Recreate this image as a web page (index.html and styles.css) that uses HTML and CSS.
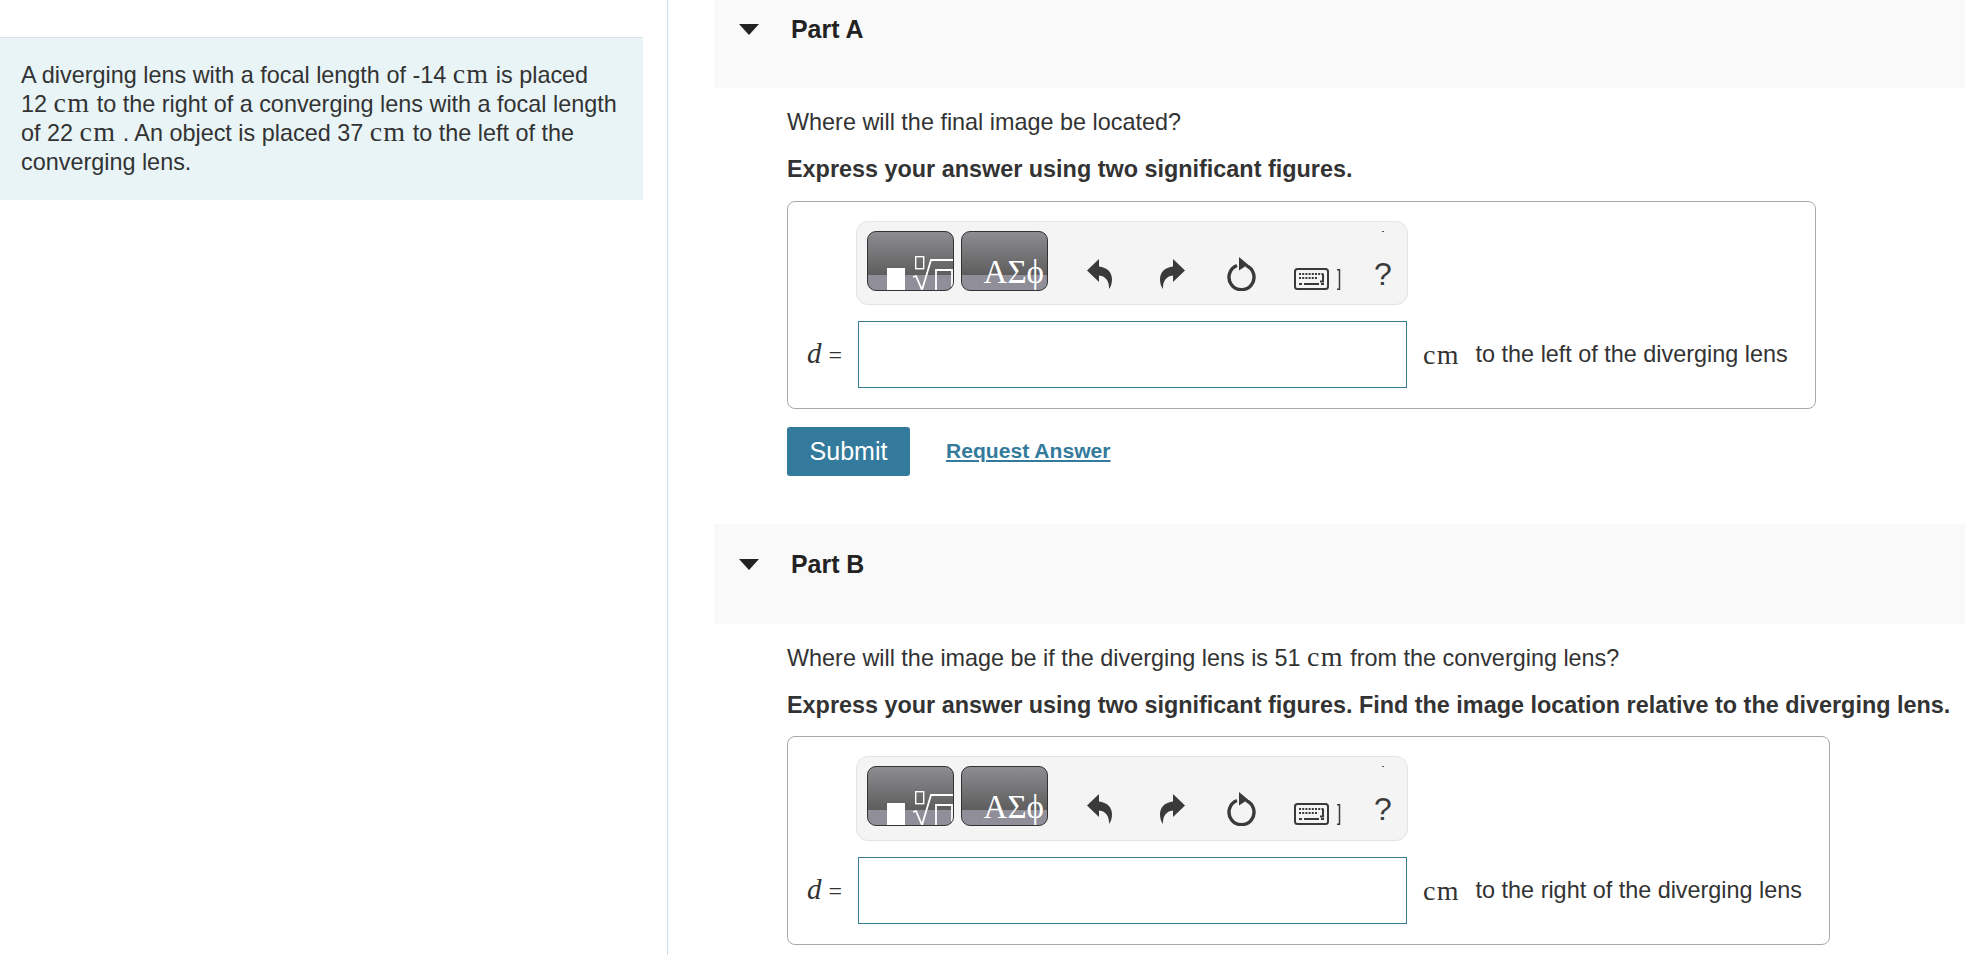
FILE: index.html
```html
<!DOCTYPE html>
<html lang="en">
<head>
<meta charset="utf-8">
<title>Lenses</title>
<link rel="stylesheet" href="styles.css">
</head>
<body>
<div class="page">
  <aside class="left">
    <div class="intro">A diverging lens with a focal length of -14 <span class="m">cm</span> is placed 12 <span class="m">cm</span> to the right of a converging lens with a focal length of 22 <span class="m">cm</span> . An object is placed 37 <span class="m">cm</span> to the left of the converging lens.</div>
  </aside>
  <main class="right">
    <section class="part">
      <header class="part-head part-head-first"><span class="tri"></span><h2>Part A</h2></header>
      <div class="part-body">
        <p class="q">Where will the final image be located?</p>
        <p class="hint">Express your answer using two significant figures.</p>
        <div class="box">
          <div class="toolbar">
            <div class="tpl"><svg width="87" height="60" viewBox="0 0 87 60"><rect x="20" y="37" width="18" height="24" fill="#fff"/><rect x="48.700" y="25.700" width="8" height="12" fill="none" stroke="#fff" stroke-width="1.400"/><path d="M46 46l3-1 6 14 9-30h23M69 61V39h16v22" fill="none" stroke="#fff" stroke-width="1.800"/></svg></div>
            <div class="tpl sym">ΑΣϕ</div>
            <svg class="ic undo" width="25" height="30" viewBox="0 0 25 30"><path d="M0 11.500L12 0v7.500C20 8.500 25 13 25 20.500c0 3.500-1 7-3 9.500 .5-7-3-13-10-13.500v6.500z" fill="#3a3a3a"/></svg>
            <svg class="ic redo" width="25" height="30" viewBox="0 0 25 30"><path d="M25 11.500L13 0v7.500C5 8.500 0 13 0 20.500c0 3.500 1 7 3 9.500-.5-7 3-13 10-13.500v6.500z" fill="#3a3a3a"/></svg>
            <svg class="ic reload" width="30" height="34" viewBox="0 0 30 34"><path d="M10 8.500a12.500 12.500 0 1 0 9 0" fill="none" stroke="#3a3a3a" stroke-width="3.400"/><path d="M12 0l9 7.500-9 6z" fill="#3a3a3a"/></svg>
            <svg class="ic kbd" width="35" height="22" viewBox="0 0 35 22"><rect x="1" y="1" width="33" height="20" rx="2.500" fill="none" stroke="#3a3a3a" stroke-width="2"/><path d="M5 6h25M5 10h19" stroke="#3a3a3a" stroke-width="2" stroke-dasharray="2 1.200" fill="none"/><path d="M29 6v7.500h-3M5 16h3M10 16h15M27 16h3" stroke="#3a3a3a" stroke-width="2" fill="none"/></svg>
            <svg class="ic brk" width="5" height="21" viewBox="0 0 5 21"><path d="M1 .7h2.500v19.600H1" fill="none" stroke="#3a3a3a" stroke-width="1.500"/></svg>
            <div class="help"><span class="dot"></span><span class="q-mark">?</span></div>
          </div>
          <div class="row">
            <span class="lab"><i>d</i><span class="eq">=</span></span>
            <div class="inp"></div>
            <span class="m unit">cm</span>
            <span class="after">to the left of the diverging lens</span>
          </div>
        </div>
        <div class="actions">
          <button class="submit" type="button">Submit</button>
          <a class="req" href="#">Request Answer</a>
        </div>
      </div>
    </section>
    <section class="part">
      <header class="part-head"><span class="tri"></span><h2>Part B</h2></header>
      <div class="part-body">
        <p class="q">Where will the image be if the diverging lens is 51 <span class="m">cm</span> from the converging lens?</p>
        <p class="hint">Express your answer using two significant figures. Find the image location relative to the diverging lens.</p>
        <div class="box">
          <div class="toolbar">
            <div class="tpl"><svg width="87" height="60" viewBox="0 0 87 60"><rect x="20" y="37" width="18" height="24" fill="#fff"/><rect x="48.700" y="25.700" width="8" height="12" fill="none" stroke="#fff" stroke-width="1.400"/><path d="M46 46l3-1 6 14 9-30h23M69 61V39h16v22" fill="none" stroke="#fff" stroke-width="1.800"/></svg></div>
            <div class="tpl sym">ΑΣϕ</div>
            <svg class="ic undo" width="25" height="30" viewBox="0 0 25 30"><path d="M0 11.500L12 0v7.500C20 8.500 25 13 25 20.500c0 3.500-1 7-3 9.500 .5-7-3-13-10-13.500v6.500z" fill="#3a3a3a"/></svg>
            <svg class="ic redo" width="25" height="30" viewBox="0 0 25 30"><path d="M25 11.500L13 0v7.500C5 8.500 0 13 0 20.500c0 3.500 1 7 3 9.500-.5-7 3-13 10-13.500v6.500z" fill="#3a3a3a"/></svg>
            <svg class="ic reload" width="30" height="34" viewBox="0 0 30 34"><path d="M10 8.500a12.500 12.500 0 1 0 9 0" fill="none" stroke="#3a3a3a" stroke-width="3.400"/><path d="M12 0l9 7.500-9 6z" fill="#3a3a3a"/></svg>
            <svg class="ic kbd" width="35" height="22" viewBox="0 0 35 22"><rect x="1" y="1" width="33" height="20" rx="2.500" fill="none" stroke="#3a3a3a" stroke-width="2"/><path d="M5 6h25M5 10h19" stroke="#3a3a3a" stroke-width="2" stroke-dasharray="2 1.200" fill="none"/><path d="M29 6v7.500h-3M5 16h3M10 16h15M27 16h3" stroke="#3a3a3a" stroke-width="2" fill="none"/></svg>
            <svg class="ic brk" width="5" height="21" viewBox="0 0 5 21"><path d="M1 .7h2.500v19.600H1" fill="none" stroke="#3a3a3a" stroke-width="1.500"/></svg>
            <div class="help"><span class="dot"></span><span class="q-mark">?</span></div>
          </div>
          <div class="row">
            <span class="lab"><i>d</i><span class="eq">=</span></span>
            <div class="inp"></div>
            <span class="m unit">cm</span>
            <span class="after">to the right of the diverging lens</span>
          </div>
        </div>
      </div>
    </section>
  </main>
</div>
</body>
</html>
```

FILE: styles.css
```css
html, body { margin: 0; height: 100%; overflow: hidden; background: #fff; }
body { font-family: "Liberation Sans", Arial, sans-serif; font-size: 23.4px; line-height: 29px; color: #333; }
.page { display: flex; height: 955px; }
.left { width: 668px; flex: none; box-sizing: border-box; border-right: 1px solid #cfdce6; padding-top: 37px; }
.intro { width: 643px; box-sizing: border-box; background: #e8f4f6; border-top: 1px solid #dde4e6; padding: 23px 24px 23px 21px; }
.m { font-family: "Liberation Serif", serif; font-size: 28px; letter-spacing: 1.200px; line-height: 0; }
.right { flex: 1; min-width: 0; padding-left: 46px; }
.part-head { display: flex; align-items: flex-start; height: 100px; background: #f9f9f9; padding-top: 26px; box-sizing: border-box; }
.part-head-first { height: 88px; padding-top: 15px; }
.tri { width: 0; height: 0; margin: 9px 0 0 25px; border-left: 10px solid transparent; border-right: 10px solid transparent; border-top: 11px solid #222; }
h2 { margin: 0 0 0 32px; font-size: 24.900px; line-height: 29px; font-weight: 700; color: #222; }
.part-body { padding-left: 73px; }
.q { margin: 20px 0 0; white-space: nowrap; }
.hint { margin: 18px 0 0; font-weight: 700; white-space: nowrap; }
.box { width: fit-content; margin-top: 16.600px; border: 1px solid #a9a9a9; border-radius: 8px; padding: 19px 27px 20px 0; }
.toolbar { display: flex; align-items: flex-start; width: 552px; height: 84.400px; box-sizing: border-box; margin-left: 68px; background: #f4f4f4; border: 1px solid #e4e4e4; border-radius: 12px; padding: 9px 10px; }
.tpl { width: 87px; height: 60px; flex: none; box-sizing: border-box; border: 1px solid #333; border-radius: 9px; overflow: hidden; background: linear-gradient(#8d8d92 0, #5d5d5d 75%, #8f8e99 75%, #8f8e99 100%); color: #fff; margin-right: 7px; }
.tpl svg { display: block; margin: -1px; }
.sym { display: flex; justify-content: flex-end; align-items: flex-end; padding-right: 3px; font-family: "Liberation Serif", serif; font-size: 33px; line-height: 35px; margin-right: 0; }
.ic { flex: none; display: block; }
.undo { margin: 28px 0 0 39px; }
.redo { margin: 28px 0 0 48px; }
.reload { margin: 26px 0 0 42px; }
.kbd { margin: 37px 0 0 37px; }
.brk { margin: 38px 0 0 7px; }
.help { display: flex; flex-direction: column; align-items: center; margin-left: 34px; width: 16px; }
.dot { width: 2px; height: 1px; background: #555; }
.q-mark { margin-top: 24px; font-size: 32px; line-height: 36px; color: #3a3a3a; }
.row { display: flex; align-items: center; margin-top: 16px; }
.lab { display: flex; align-items: baseline; width: 52px; padding-left: 19px; margin-right: -1px; flex: none; font-family: "Liberation Serif", serif; }
.lab i { font-size: 29px; }
.eq { margin-left: 7px; font-size: 24px; }
.inp { width: 549px; height: 67px; flex: none; box-sizing: border-box; border: 1px solid #3a7a99; background: #fff; }
.unit { margin-left: 16px; line-height: 29px; }
.after { margin-left: 16px; white-space: nowrap; }
.actions { display: flex; align-items: center; margin: 17.600px 0 48px; }
.submit { width: 123px; height: 49px; border: 0; border-radius: 3px; background: #337a9c; color: #fff; font: 25px "Liberation Sans", Arial, sans-serif; padding: 0; }
.req { margin-left: 36px; margin-top: -2px; font-weight: 700; font-size: 21.100px; color: #337a9c; text-decoration: underline; }
```
